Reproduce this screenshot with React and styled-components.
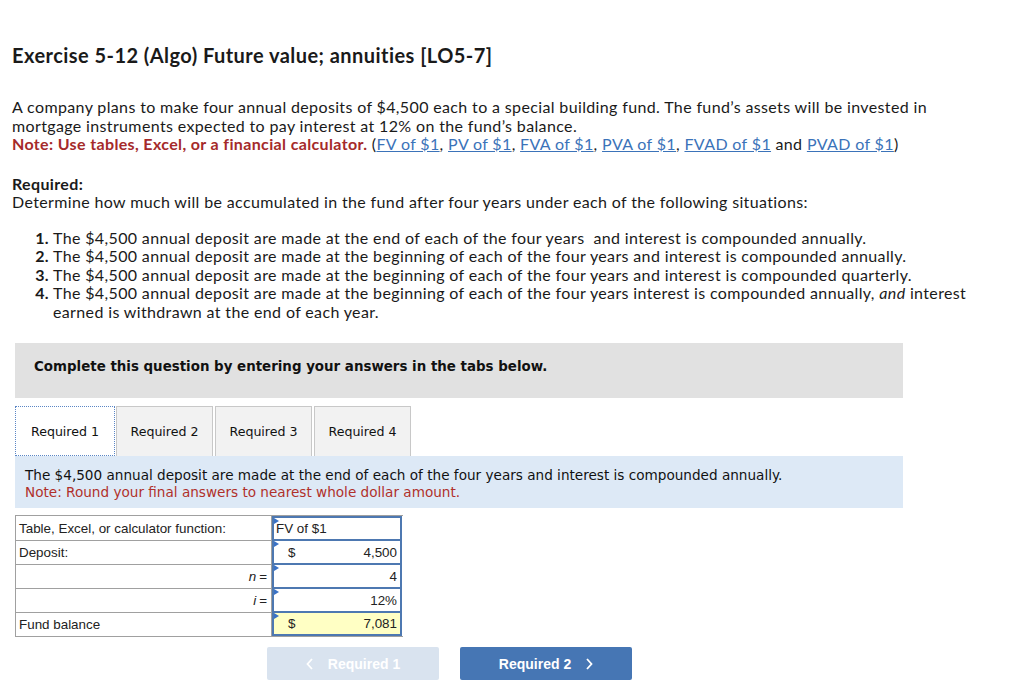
import React from 'react';
import styled, { createGlobalStyle } from 'styled-components';

const Global = createGlobalStyle`
    body {
        margin: 0;
        background: #fff;
        color: #1a1a1a;
        font-family: Lato, "Open Sans", sans-serif;
    }
`;

const Page = styled.div`
    padding: 0 12px 0 12px;
    width: 1024px;
    box-sizing: border-box;
`;

const Title = styled.h1`
    margin: 0;
    padding-top: 42px;
    font-size: 20px;
    letter-spacing: 0.45px;
    font-weight: 700;
    line-height: 26px;
`;

const Para = styled.p`
    margin: ${p => p.$top || 0}px 0 0 0;
    font-size: 16px;
    letter-spacing: 0.36px;
    line-height: 18.5px;
`;

const Red = styled.span`
    color: #a52a2a;
    font-weight: 700;
`;

const Ref = styled.a`
    color: #3b73b9;
    text-decoration: underline;
`;

const List = styled.ol`
    margin: 17px 0 0 0;
    padding: 0 0 0 41px;
    list-style: none;
    counter-reset: item;
    font-size: 16px;
    letter-spacing: 0.36px;
    line-height: 18.6px;
`;

const Item = styled.li`
    counter-increment: item;
    position: relative;
    &::before {
        content: counter(item) ".";
        font-weight: 700;
        position: absolute;
        left: -32px;
        width: 28px;
        text-align: right;
    }
`;

const Verdana = styled.div`
    font-family: "DejaVu Sans", Verdana, sans-serif;
`;

const Banner = styled.div`
    margin: 22px 0 0 3px;
    width: 888px;
    height: 55px;
    box-sizing: border-box;
    background: #e1e1e1;
    padding: 16px 0 0 19px;
    font-size: 13.4px;
    font-weight: 700;
    color: #111;
`;

const Tabs = styled.div`
    display: flex;
    margin: 8px 0 0 3px;
    gap: 2px;
`;

const Tab = styled.div`
    width: 97px;
    height: 50px;
    box-sizing: border-box;
    display: flex;
    align-items: center;
    justify-content: center;
    font-size: 12.6px;
    color: #111;
    border: 1px solid ${p => (p.$active ? '#5b86c5' : '#c8c8c8')};
    border-style: ${p => (p.$active ? 'dotted' : 'solid')};
    border-bottom: ${p => (p.$active ? '1px dotted #5b86c5' : 'none')};
    background: ${p => (p.$active ? '#fff' : '#f2f2f2')};
    ${p => p.$active && 'width: 100px; margin-right: -1px;'}
`;

const Panel = styled.div`
    margin: 0 0 0 3px;
    width: 888px;
    height: 52px;
    box-sizing: border-box;
    background: #dde9f6;
    padding: 11px 0 0 10px;
    font-size: 13.6px;
    line-height: 16.5px;
    color: #111;
`;

const Hint = styled.div`
    color: #b0302a;
`;

const Grid = styled.div`
    margin: 7px 0 0 3px;
    display: grid;
    grid-template-columns: 256px 130px;
    width: 387px;
    border: 1px solid #a0a0a0;
    border-right: none;
    font-family: "Liberation Sans", Arial, sans-serif;
    font-size: 13.4px;
    color: #222;
`;

const Label = styled.div`
    height: 24px;
    box-sizing: border-box;
    display: flex;
    align-items: center;
    justify-content: ${p => (p.$right ? 'flex-end' : 'flex-start')};
    padding: 0 4px 0 3px;
    border-top: ${p => (p.$first ? 'none' : '1px solid #a0a0a0')};
    border-right: 1px solid #a0a0a0;
    i { margin-right: 3px; }
`;

const Cell = styled.div`
    position: relative;
    height: 24px;
    box-sizing: border-box;
    display: flex;
    align-items: center;
    justify-content: ${p => (p.$left ? 'flex-start' : 'space-between')};
    padding: 0 3px 0 ${p => (p.$left ? 2 : 14)}px;
    border: 2px solid #4d78b1;
    border-top-width: ${p => (p.$first ? 2 : 1)}px;
    border-bottom-width: ${p => (p.$last ? 2 : 1)}px;
    background: ${p => (p.$hl ? '#ffffc4' : '#fff')};
    &::before {
        content: '';
        position: absolute;
        left: 0;
        top: 0;
        border-left: 5px solid #3a72c6;
        border-top: 3px solid transparent;
        border-bottom: 3px solid transparent;
    }
`;

const Value = styled.span`
    margin-left: auto;
`;

const Nav = styled.div`
    display: flex;
    gap: 21px;
    margin: 10px 0 0 255px;
`;

const NavBtn = styled.div`
    width: 172px;
    height: 33px;
    display: flex;
    align-items: center;
    justify-content: center;
    gap: 14px;
    border-radius: 2px;
    font-family: "Liberation Sans", Arial, sans-serif;
    font-weight: 700;
    font-size: 14px;
    color: #fff;
    background: ${p => (p.$disabled ? '#d9e3ef' : '#4676b4')};
`;

const Chevron = ({ dir }) => (
    <svg width="8" height="12" viewBox="0 0 8 12">
        <path
            d={dir === 'left' ? 'M6 1 L1.5 6 L6 11' : 'M2 1 L6.5 6 L2 11'}
            fill="none"
            stroke="#fff"
            strokeWidth="1.8"
        />
    </svg>
);

const App = () => {
    return (
        <Page>
            <Global />
            <Title>Exercise 5-12 (Algo) Future value; annuities [LO5-7]</Title>
            <Para $top={30}>
                A company plans to make four annual deposits of $4,500 each to a special building fund. The fund’s assets will be invested in
                <br />
                mortgage instruments expected to pay interest at 12% on the fund’s balance.
                <br />
                <Red>Note: Use tables, Excel, or a financial calculator.</Red> (<Ref>FV of $1</Ref>, <Ref>PV of $1</Ref>, <Ref>FVA of $1</Ref>, <Ref>PVA of $1</Ref>, <Ref>FVAD of $1</Ref> and <Ref>PVAD of $1</Ref>)
            </Para>
            <Para $top={21}>
                <b>Required:</b>
                <br />
                Determine how much will be accumulated in the fund after four years under each of the following situations:
            </Para>
            <List>
                <Item>The $4,500 annual deposit are made at the end of each of the four years&nbsp; and interest is compounded annually.</Item>
                <Item>The $4,500 annual deposit are made at the beginning of each of the four years and interest is compounded annually.</Item>
                <Item>The $4,500 annual deposit are made at the beginning of each of the four years and interest is compounded quarterly.</Item>
                <Item>The $4,500 annual deposit are made at the beginning of each of the four years interest is compounded annually, <i>and</i> interest<br />earned is withdrawn at the end of each year.</Item>
            </List>
            <Verdana>
                <Banner>Complete this question by entering your answers in the tabs below.</Banner>
                <Tabs>
                    <Tab $active>Required 1</Tab>
                    <Tab>Required 2</Tab>
                    <Tab>Required 3</Tab>
                    <Tab>Required 4</Tab>
                </Tabs>
                <Panel>
                    The $4,500 annual deposit are made at the end of each of the four years and interest is compounded annually.
                    <Hint>Note: Round your final answers to nearest whole dollar amount.</Hint>
                </Panel>
            </Verdana>
            <Grid>
                <Label $first>Table, Excel, or calculator function:</Label>
                <Cell $first $left>FV of $1</Cell>
                <Label>Deposit:</Label>
                <Cell><span>$</span><Value>4,500</Value></Cell>
                <Label $right><i>n</i> =</Label>
                <Cell><Value>4</Value></Cell>
                <Label $right><i>i</i> =</Label>
                <Cell><Value>12%</Value></Cell>
                <Label>Fund balance</Label>
                <Cell $last $hl><span>$</span><Value>7,081</Value></Cell>
            </Grid>
            <Nav>
                <NavBtn $disabled><Chevron dir="left" />Required 1</NavBtn>
                <NavBtn>Required 2<Chevron dir="right" /></NavBtn>
            </Nav>
        </Page>
    );
};

export default App;
